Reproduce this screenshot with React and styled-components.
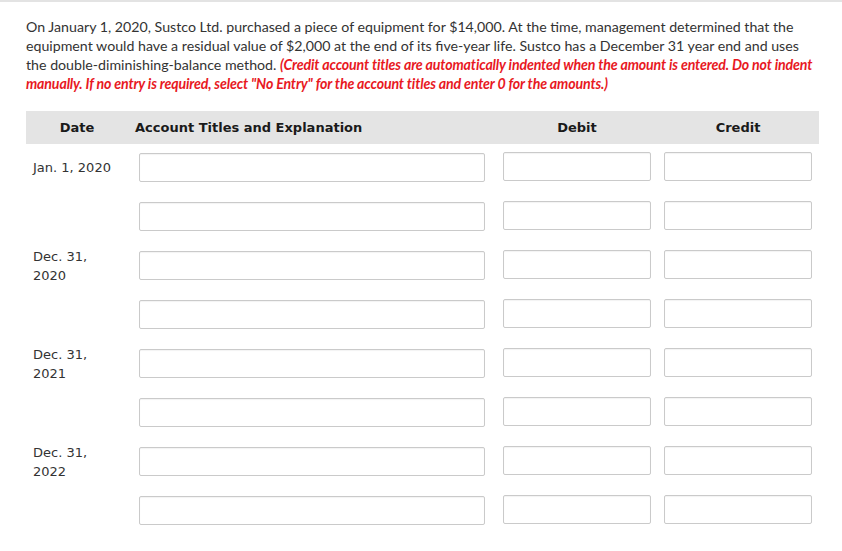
import React from 'react'
import styled, { createGlobalStyle } from 'styled-components';

const GlobalStyle = createGlobalStyle`
  html, body {
    margin: 0;
    padding: 0;
    background: #fff;
  }
`;

const rows = [
  { date: ['Jan. 1, 2020'] },
  { date: [] },
  { date: ['Dec. 31,', '2020'] },
  { date: [] },
  { date: ['Dec. 31,', '2021'] },
  { date: [] },
  { date: ['Dec. 31,', '2022'] },
  { date: [] },
];

export default function App() {
  return (
    <Wrapper>
      <GlobalStyle />
      <Question>
        On January 1, 2020, Sustco Ltd. purchased a piece of equipment for $14,000. At the time, management determined that the<br />
        equipment would have a residual value of $2,000 at the end of its five-year life. Sustco has a December 31 year end and uses<br />
        the double-diminishing-balance method. <Note>(Credit account titles are automatically indented when the amount is entered. Do not indent<br />
        manually. If no entry is required, select "No Entry" for the account titles and enter 0 for the amounts.)</Note>
      </Question>

      <Journal>
        <HeadRow>
          <HeadCell $pad="0 11px 0 0">Date</HeadCell>
          <HeadCell $align="left" $shift="-4px">Account Titles and Explanation</HeadCell>
          <HeadCell $width="148px">Debit</HeadCell>
          <HeadCell $width="148px">Credit</HeadCell>
        </HeadRow>

        {rows.map((row, i) => (
          <EntryRow key={i} $first={i === 0}>
            <DateCell>
              {row.date.map((line, j) => <div key={j}>{line}</div>)}
            </DateCell>
            <Field type="text" $width="346px" />
            <Field type="text" $width="148px" $up />
            <Field type="text" $width="148px" $up />
          </EntryRow>
        ))}
      </Journal>
    </Wrapper>
  )
}

const Wrapper = styled.section`
  border-top: 2px solid #e3e3e3;
  padding: 15px 0 0 26px;
  width: 842px;
  height: 549px;
  box-sizing: border-box;
  overflow: hidden;
`;

const Question = styled.p`
  margin: 0;
  width: 800px;
  white-space: nowrap;
  font-family: Lato, "Open Sans", sans-serif;
  font-size: 14.2px;
  line-height: 19px;
  color: #333;
`;

const Note = styled.span`
  color: #e8191f;
  font-style: italic;
  font-weight: 700;
  letter-spacing: -0.15px;
`;

const Journal = styled.div`
  margin-top: 18px;
  width: 793px;
  font-family: "DejaVu Sans", Verdana, Tahoma, sans-serif;
  font-size: 13px;
`;

const columns = '113px 364px 161px 155px';

const HeadRow = styled.div`
  display: grid;
  grid-template-columns: ${columns};
  align-items: center;
  height: 33px;
  background: #e4e4e4;
`;

const HeadCell = styled.div`
  width: ${({ $width }) => $width || 'auto'};
  padding: ${({ $pad }) => $pad || '0'};
  margin-left: ${({ $shift }) => $shift || '0'};
  text-align: ${({ $align }) => $align || 'center'};
  font-weight: 700;
  color: #1a1a1a;
`;

const EntryRow = styled.div`
  display: grid;
  grid-template-columns: ${columns};
  grid-template-rows: 29px;
  align-items: center;
  margin-top: ${({ $first }) => ($first ? '9px' : '20px')};
`;

const DateCell = styled.div`
  padding-left: 7px;
  line-height: 19px;
  color: #333;
`;

const Field = styled.input`
  box-sizing: border-box;
  width: ${({ $width }) => $width};
  height: 29px;
  margin: 0;
  position: relative;
  top: ${({ $up }) => ($up ? '-1px' : '0')};
  border: 1px solid #cacaca;
  border-radius: 2px;
  box-shadow: inset 0 1px 1px rgba(0, 0, 0, 0.05);
  background: #fff;
  outline: none;
`;
